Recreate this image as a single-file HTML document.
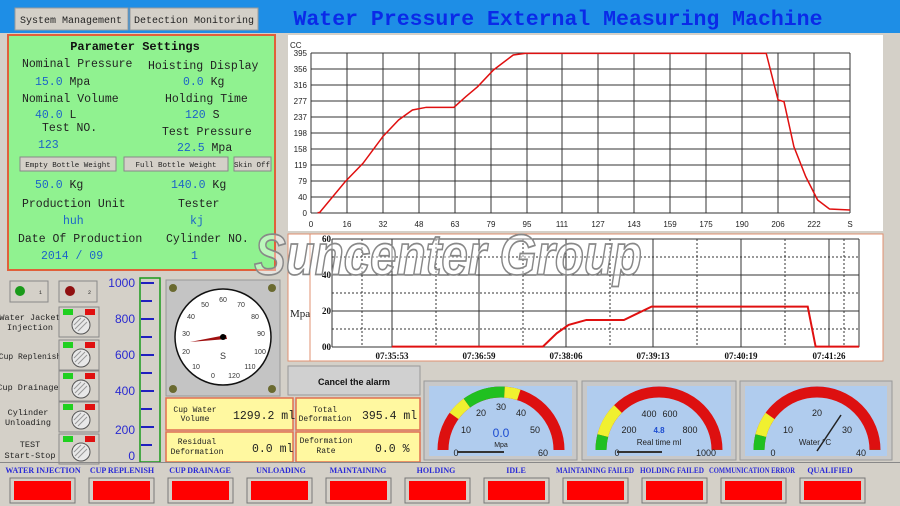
<!DOCTYPE html>
<html><head><meta charset="utf-8"><style>
html,body{margin:0;padding:0;width:900px;height:506px;overflow:hidden;background:#d4d0c8}
svg{display:block;font-family:"Liberation Mono",monospace}
.lb{fill:#222;font-size:11.5px}
.bv{fill:#1c64c8;font-size:11.5px}
.st{fill:#2a2ad8;font-size:8px;font-weight:bold;font-family:"Liberation Serif",serif}
.ax{font-family:"Liberation Sans",sans-serif;font-size:8px;fill:#222}
</style></head><body>
<svg width="900" height="506" viewBox="0 0 900 506" xmlns="http://www.w3.org/2000/svg">
<rect x="0" y="0" width="900" height="33" fill="#1e8ee6"/>
<rect x="15" y="8" width="113" height="22" fill="#d4d0c8" stroke="#9a9a9a"/>
<rect x="130" y="8" width="128" height="22" fill="#d4d0c8" stroke="#9a9a9a"/>
<text x="71" y="23" text-anchor="middle" font-size="10" fill="#222">System Management</text>
<text x="194" y="23" text-anchor="middle" font-size="10" fill="#222">Detection Monitoring</text>
<text x="558" y="25" text-anchor="middle" font-size="21.5" font-weight="bold" fill="#0a2ae8">Water Pressure External Measuring Machine</text>

<rect x="8" y="35" width="267" height="235" fill="#90f290" stroke="#e0603a" stroke-width="2"/>
<text x="135" y="50" text-anchor="middle" font-size="12" font-weight="bold" fill="#111">Parameter Settings</text>
<text x="22" y="67" class="lb">Nominal Pressure</text>
<text x="148" y="69" class="lb" font-size="12.5">Hoisting Display</text>
<text x="35" y="85" class="bv">15.0 <tspan fill="#222">Mpa</tspan></text>
<text x="183" y="85" class="bv">0.0 <tspan fill="#222">Kg</tspan></text>
<text x="22" y="102" class="lb">Nominal Volume</text>
<text x="165" y="102" class="lb">Holding Time</text>
<text x="35" y="118" class="bv">40.0 <tspan fill="#222">L</tspan></text>
<text x="185" y="118" class="bv">120 <tspan fill="#222">S</tspan></text>
<text x="42" y="131" class="lb">Test NO.</text>
<text x="162" y="135" class="lb">Test Pressure</text>
<text x="38" y="148" class="bv">123</text>
<text x="177" y="151" class="bv">22.5 <tspan fill="#222">Mpa</tspan></text>
<rect x="20" y="157" width="96" height="14" fill="#d4d0c8" stroke="#888"/>
<rect x="124" y="157" width="104" height="14" fill="#d4d0c8" stroke="#888"/>
<rect x="234" y="157" width="37" height="14" fill="#d4d0c8" stroke="#888"/>
<text x="68" y="167" text-anchor="middle" font-size="7.5" fill="#222">Empty Bottle Weight</text>
<text x="176" y="167" text-anchor="middle" font-size="7.5" fill="#222">Full Bottle Weight</text>
<text x="252" y="167" text-anchor="middle" font-size="7.5" fill="#222">Skin Off</text>
<text x="35" y="188" class="bv">50.0 <tspan fill="#222">Kg</tspan></text>
<text x="171" y="188" class="bv">140.0 <tspan fill="#222">Kg</tspan></text>
<text x="22" y="207" class="lb">Production Unit</text>
<text x="178" y="207" class="lb">Tester</text>
<text x="63" y="224" class="bv">huh</text>
<text x="190" y="224" class="bv">kj</text>
<text x="18" y="242" class="lb">Date Of Production</text>
<text x="166" y="242" class="lb">Cylinder NO.</text>
<text x="41" y="259" class="bv">2014 / 09</text>
<text x="191" y="259" class="bv">1</text>

<rect x="288" y="35" width="595" height="196" fill="#fff"/>
<g stroke="#333" stroke-width="1">
<path d="M311 53H850M311 69H850M311 85H850M311 101H850M311 117H850M311 133H850M311 149H850M311 165H850M311 181H850M311 197H850M311 213H850"/>
<path d="M311 53V213M347 53V213M383 53V213M419 53V213M455 53V213M491 53V213M527 53V213M562 53V213M598 53V213M634 53V213M670 53V213M706 53V213M742 53V213M778 53V213M814 53V213M850 53V213"/>
</g>
<g class="ax" text-anchor="end">
<text x="307" y="56">395</text><text x="307" y="72">356</text><text x="307" y="88">316</text><text x="307" y="104">277</text><text x="307" y="120">237</text><text x="307" y="136">198</text><text x="307" y="152">158</text><text x="307" y="168">119</text><text x="307" y="184">79</text><text x="307" y="200">40</text><text x="307" y="216">0</text>
</g>
<text x="290" y="48" class="ax">CC</text>
<g class="ax" text-anchor="middle">
<text x="311" y="227">0</text><text x="347" y="227">16</text><text x="383" y="227">32</text><text x="419" y="227">48</text><text x="455" y="227">63</text><text x="491" y="227">79</text><text x="527" y="227">95</text><text x="562" y="227">111</text><text x="598" y="227">127</text><text x="634" y="227">143</text><text x="670" y="227">159</text><text x="706" y="227">175</text><text x="742" y="227">190</text><text x="778" y="227">206</text><text x="814" y="227">222</text><text x="850" y="227">S</text>
</g>
<g transform="translate(280,30) scale(0.3953,0.3333)">
<path vector-effect="non-scaling-stroke" fill="none" stroke="#e01010" stroke-width="1.5" d="M95 548L100 548L165 455L210 400L260 320L300 270L335 240L370 232L440 232L470 200L500 170L540 120L590 75L620 70L1230 70L1260 210L1275 215L1300 350L1330 440L1360 510L1390 537L1442 540"/>
</g>

<rect x="288" y="234" width="595" height="127" fill="#fff" stroke="#e09070"/>
<line x1="310" y1="234" x2="310" y2="361" stroke="#e09070"/>
<text x="290" y="317" font-family="Liberation Serif,serif" font-size="11" fill="#222">Mpa</text>
<g stroke="#333" stroke-dasharray="2,2">
<path d="M332 257H859M332 293H859M332 329H859"/>
<path d="M362 239V347M436 239V347M523 239V347M610 239V347M697 239V347M785 239V347M844 239V347"/>
</g>
<g stroke="#333">
<path d="M332 239H859M332 275H859M332 311H859M332 347H859M332 239V347M859 239V347"/>
<path d="M392 239V347M479 239V347M566 239V347M653 239V347M741 239V347M829 239V347"/>
</g>
<g font-family="Liberation Serif,serif" font-weight="bold" font-size="9" fill="#111">
<text x="322" y="242">60</text><text x="322" y="278">40</text><text x="322" y="314">20</text><text x="322" y="350">00</text>
<g text-anchor="middle"><text x="392" y="359">07:35:53</text><text x="479" y="359">07:36:59</text><text x="566" y="359">07:38:06</text><text x="653" y="359">07:39:13</text><text x="741" y="359">07:40:19</text><text x="829" y="359">07:41:26</text></g>
</g>
<g transform="translate(280,30) scale(0.3953,0.3333)">
<path vector-effect="non-scaling-stroke" fill="none" stroke="#e01010" stroke-width="2" d="M283 950L665 950L700 910L730 885L775 870L870 870L940 830L1335 830L1355 950L1465 950"/>
</g>
<text x="448" y="272" text-anchor="middle" font-family="Liberation Sans,sans-serif" font-style="italic" font-weight="bold" font-size="50" fill="#fff" fill-opacity="0.4" stroke="#888" stroke-width="1.5" transform="translate(448,255) scale(0.95,1.15) translate(-448,-255)">Suncenter Group</text>

<rect x="288" y="366" width="132" height="29" fill="#d0d0d0" stroke="#999"/>
<text x="354" y="385" text-anchor="middle" font-family="Liberation Sans,sans-serif" font-weight="bold" font-size="9" fill="#111">Cancel the alarm</text>

<g>
<rect x="424" y="381" width="153" height="79" fill="#c8c8c8" stroke="#999"/>
<rect x="429" y="386" width="143" height="70" fill="#b0ccee"/>
<path d="M443 450A58 58 0 0 1 559 450" pathLength="100" fill="none" stroke-width="11" stroke="#dd1010"/>
<path d="M443 450A58 58 0 0 1 559 450" pathLength="100" fill="none" stroke-width="11" stroke="#f0f030" stroke-dasharray="0 20 10 70"/>
<path d="M443 450A58 58 0 0 1 559 450" pathLength="100" fill="none" stroke-width="11" stroke="#20c020" stroke-dasharray="0 30 22 48"/>
<path d="M443 450A58 58 0 0 1 559 450" pathLength="100" fill="none" stroke-width="11" stroke="#f0f030" stroke-dasharray="0 52 8 40"/>
<g font-family="Liberation Sans,sans-serif" font-size="9" fill="#222" text-anchor="middle"><text x="466" y="433">10</text><text x="481" y="416">20</text><text x="501" y="410">30</text><text x="521" y="416">40</text><text x="535" y="433">50</text><text x="543" y="456">60</text><text x="456" y="456">0</text></g>
<text x="501" y="437" text-anchor="middle" font-family="Liberation Sans,sans-serif" font-size="12" fill="#1c4cd0">0.0</text>
<text x="501" y="447" text-anchor="middle" font-family="Liberation Sans,sans-serif" font-size="7" fill="#222">Mpa</text>
<line x1="457" y1="452" x2="504" y2="452" stroke="#333" stroke-width="2"/>
</g>
<g>
<rect x="582" y="381" width="154" height="79" fill="#c8c8c8" stroke="#999"/>
<rect x="587" y="386" width="144" height="70" fill="#b0ccee"/>
<path d="M601 450A58 58 0 0 1 717 450" pathLength="100" fill="none" stroke-width="11" stroke="#dd1010"/>
<path d="M601 450A58 58 0 0 1 717 450" pathLength="100" fill="none" stroke-width="11" stroke="#f0f030" stroke-dasharray="0 8 17 75"/>
<path d="M601 450A58 58 0 0 1 717 450" pathLength="100" fill="none" stroke-width="11" stroke="#20c020" stroke-dasharray="8 92"/>
<g font-family="Liberation Sans,sans-serif" font-size="9" fill="#222" text-anchor="middle"><text x="629" y="433">200</text><text x="649" y="417">400</text><text x="670" y="417">600</text><text x="690" y="433">800</text><text x="706" y="456">1000</text><text x="617" y="456">0</text></g>
<text x="659" y="433" text-anchor="middle" font-family="Liberation Sans,sans-serif" font-weight="bold" font-size="8" fill="#1c4cd0">4.8</text>
<text x="659" y="445" text-anchor="middle" font-family="Liberation Sans,sans-serif" font-size="8" fill="#222">Real time ml</text>
<line x1="617" y1="452" x2="662" y2="452" stroke="#333" stroke-width="2"/>
</g>
<g>
<rect x="740" y="381" width="152" height="79" fill="#c8c8c8" stroke="#999"/>
<rect x="745" y="386" width="142" height="70" fill="#b0ccee"/>
<path d="M759 450A58 58 0 0 1 875 450" pathLength="100" fill="none" stroke-width="11" stroke="#dd1010"/>
<path d="M759 450A58 58 0 0 1 875 450" pathLength="100" fill="none" stroke-width="11" stroke="#f0f030" stroke-dasharray="0 8 12 80"/>
<path d="M759 450A58 58 0 0 1 875 450" pathLength="100" fill="none" stroke-width="11" stroke="#20c020" stroke-dasharray="8 92"/>
<g font-family="Liberation Sans,sans-serif" font-size="9" fill="#222" text-anchor="middle"><text x="788" y="433">10</text><text x="817" y="416">20</text><text x="847" y="433">30</text><text x="861" y="456">40</text><text x="773" y="456">0</text></g>
<text x="815" y="445" text-anchor="middle" font-family="Liberation Sans,sans-serif" font-size="8" fill="#222">Water °C</text>
<line x1="817" y1="451" x2="841" y2="415" stroke="#222" stroke-width="1.5"/>
</g>

<rect x="10" y="281" width="38" height="21" fill="#d4d0c8" stroke="#888"/>
<circle cx="20" cy="291" r="5" fill="#1a9a1a"/><text x="39" y="294" font-size="5" fill="#222">1</text>
<rect x="59" y="281" width="38" height="21" fill="#d4d0c8" stroke="#888"/>
<circle cx="70" cy="291" r="5" fill="#901010"/><text x="88" y="294" font-size="5" fill="#222">2</text>
<g font-size="8.5" fill="#222" text-anchor="middle">
<text x="30" y="320">Water Jacket</text><text x="30" y="330">Injection</text>
<text x="30" y="359" font-size="8">Cup Replenish</text>
<text x="28" y="390">Cup Drainage</text>
<text x="28" y="415">Cylinder</text><text x="28" y="425">Unloading</text>
<text x="30" y="447">TEST</text><text x="30" y="458">Start-Stop</text>
</g>
<g id="sw">
<rect x="59" y="307" width="40" height="30" fill="#d4d0c8" stroke="#888"/>
<rect x="63" y="309" width="10" height="6" fill="#20d020"/><rect x="85" y="309" width="10" height="6" fill="#e01010"/>
<circle cx="81" cy="325" r="9" fill="#e8e8e8" stroke="#555"/>
<path d="M75 329L85 319M78 331L87 322M74 325L81 318" stroke="#999"/>
</g>
<use href="#sw" y="33"/><use href="#sw" y="64"/><use href="#sw" y="95"/><use href="#sw" y="127"/>
<g font-family="Liberation Sans,sans-serif" font-size="12" fill="#2a2ad0" text-anchor="end">
<text x="135" y="287">1000</text><text x="135" y="323">800</text><text x="135" y="359">600</text><text x="135" y="395">400</text><text x="135" y="434">200</text><text x="135" y="460">0</text>
</g>
<rect x="140" y="278" width="20" height="184" fill="none" stroke="#1a9a1a" stroke-width="1.5"/>
<g stroke="#2020c0" stroke-width="2">
<path d="M141 283H154M141 301H152M141 319H154M141 337H152M141 355H154M141 373H152M141 391H154M141 409H152M141 427H154M141 445H152"/>
</g>
<rect x="166" y="280" width="114" height="116" fill="#c4c4c4" stroke="#999"/>
<circle cx="173" cy="288" r="4" fill="#6a6a30"/><circle cx="272" cy="288" r="4" fill="#6a6a30"/>
<circle cx="173" cy="389" r="4" fill="#6a6a30"/><circle cx="272" cy="389" r="4" fill="#6a6a30"/>
<circle cx="223" cy="337" r="48" fill="#fff" stroke="#111" stroke-width="1.5"/>
<g font-family="Liberation Sans,sans-serif" font-size="7" fill="#333" text-anchor="middle">
<text x="213" y="378">0</text><text x="196" y="369">10</text><text x="186" y="354">20</text><text x="186" y="336">30</text><text x="191" y="319">40</text><text x="205" y="307">50</text><text x="223" y="302">60</text><text x="241" y="307">70</text><text x="255" y="319">80</text><text x="261" y="336">90</text><text x="260" y="354">100</text><text x="250" y="369">110</text><text x="234" y="378">120</text>
<text x="223" y="359" font-size="9">S</text>
</g>
<path d="M190 342L226 335L227 339Z" fill="#a01010"/><circle cx="223" cy="337" r="3" fill="#000"/>
<rect x="166" y="398" width="127" height="32" fill="#fff8a0" stroke="#e07050" stroke-width="1.5"/>
<rect x="166" y="432" width="127" height="30" fill="#fff8a0" stroke="#e07050" stroke-width="1.5"/>
<rect x="296" y="398" width="124" height="32" fill="#fff8a0" stroke="#e07050" stroke-width="1.5"/>
<rect x="296" y="432" width="124" height="30" fill="#fff8a0" stroke="#e07050" stroke-width="1.5"/>
<g font-size="8" fill="#222" text-anchor="middle">
<text x="195" y="412">Cup Water</text><text x="195" y="421">Volume</text>
<text x="197" y="444">Residual</text><text x="197" y="454">Deformation</text>
<text x="325" y="412">Total</text><text x="325" y="421">Deformation</text>
<text x="326" y="443">Deformation</text><text x="326" y="453">Rate</text>
</g>
<g font-size="11.5" fill="#222">
<text x="233" y="419">1299.2 ml</text><text x="252" y="452">0.0 ml</text>
<text x="362" y="419">395.4 ml</text><text x="375" y="452">0.0 %</text>
</g>
<line x1="0" y1="462.5" x2="900" y2="462.5" stroke="#888"/>
<g class="st" text-anchor="middle">
<text x="43" y="473">WATER INJECTION</text><text x="122" y="473">CUP REPLENISH</text><text x="200" y="473">CUP DRAINAGE</text><text x="281" y="473">UNLOADING</text><text x="358" y="473">MAINTAINING</text><text x="436" y="473">HOLDING</text><text x="516" y="473">IDLE</text><text x="595" y="473" textLength="78" lengthAdjust="spacingAndGlyphs">MAINTAINING FAILED</text><text x="672" y="473" textLength="64" lengthAdjust="spacingAndGlyphs">HOLDING FAILED</text><text x="752" y="473" textLength="86" lengthAdjust="spacingAndGlyphs">COMMUNICATION ERROR</text><text x="830" y="473">QUALIFIED</text>
</g>
<g id="bx"><rect x="10" y="478" width="65" height="25" fill="#d4d0c8" stroke="#777"/><rect x="14" y="481" width="57" height="19" fill="#ff0000"/></g>
<use href="#bx" x="79"/><use href="#bx" x="158"/><use href="#bx" x="237"/><use href="#bx" x="316"/><use href="#bx" x="395"/><use href="#bx" x="474"/><use href="#bx" x="553"/><use href="#bx" x="632"/><use href="#bx" x="711"/><use href="#bx" x="790"/>
</svg>
</body></html>
